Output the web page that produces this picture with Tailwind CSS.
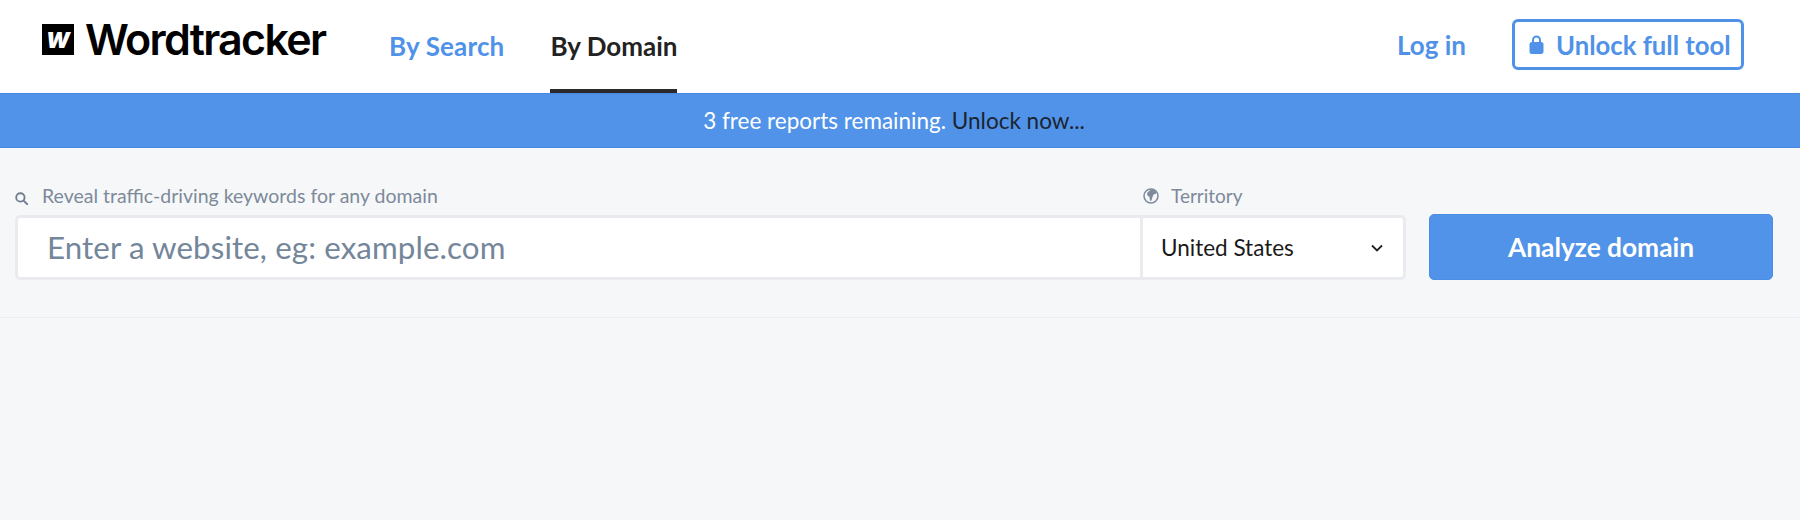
<!DOCTYPE html>
<html lang="en">
<head>
  <meta charset="UTF-8">
  <meta name="viewport" content="width=device-width, initial-scale=1.0">
  <title>Wordtracker</title>
  <script src="https://cdn.jsdelivr.net/npm/@tailwindcss/browser@4"></script>
</head>
<body class="bg-[#f6f7f9] font-['Lato',sans-serif] h-[520px] overflow-hidden">
  <!-- Top nav -->
  <header class="h-[93px] bg-white flex items-stretch pl-[42px] pr-[56px]">
    <a class="flex items-center gap-[11px] h-[79px] w-[347px]">
      <span class="w-[32px] h-[31px] bg-black text-white flex items-center justify-center font-['Inter',sans-serif] font-black italic text-[22px] leading-none">W</span>
      <span class="font-['Inter',sans-serif] font-semibold text-[43px] leading-none tracking-[-1.7px] text-black">Wordtracker</span>
    </a>
    <nav class="flex gap-[46px] text-[26px] font-bold">
      <a class="flex items-center text-[#4f92e8] tracking-[0.15px]">By Search</a>
      <a class="flex items-center text-[#222] border-b-4 border-[#2a2a2a] pt-[4px]">By Domain</a>
    </nav>
    <div class="ml-auto flex items-center gap-[46px] pb-[4px] text-[26px] font-bold text-[#4f92e8]">
      <a class="pt-[2px]">Log in</a>
      <a class="h-[51px] w-[232px] border-[3px] border-[#4f92e8] rounded-[6px] flex items-center gap-[12px] pl-[14px]">
        <svg class="w-[15px] h-[19px]" viewBox="0 0 15 19" fill="#4f92e8">
          <path d="M4 8V5a3.5 3.5 0 0 1 7 0v3" fill="none" stroke="#4f92e8" stroke-width="2"/>
          <rect x="0.5" y="7" width="14" height="12" rx="2.5"/>
        </svg>
        <span class="text-[25.7px] pt-[2px]">Unlock full tool</span>
      </a>
    </div>
  </header>

  <!-- Reports banner -->
  <div class="h-[55px] bg-[#5093e8] border-y border-[#4488e2] flex items-center justify-center pr-[12px] text-[22.5px] text-white">
    <span>3 free reports remaining. <a class="text-[#1c2430]">Unlock now...</a></span>
  </div>

  <!-- Search form -->
  <section class="h-[170px] border-b border-[#ebedf0] pl-[15px] pr-[27px] pt-[32px] flex gap-[23px]">
    <div class="w-[1391px]">
      <div class="flex h-[35px] pb-[3px] text-[19.5px] text-[#7d8a9a]">
        <div class="w-[1128px] flex items-center">
          <svg class="w-[13px] h-[13px] mt-[4px] mr-[14px]" viewBox="0 0 14 14" fill="none" stroke="#6f7d8e" stroke-width="2">
            <circle cx="5.8" cy="5.8" r="4.5"/>
            <path d="M9.2 9.2l4 4" stroke-linecap="round"/>
          </svg>
          Reveal traffic-driving keywords for any domain
        </div>
        <div class="flex items-center gap-[12px] text-[19px]">
          <svg class="w-[16px] h-[16px]" viewBox="0 0 16 16">
            <circle cx="8" cy="8" r="7" fill="none" stroke="#7d8a9a" stroke-width="1.5"/>
            <path d="M5 4l3-2.5 4 1 1.5 3-3 1-1 2.5-1 3.5-1.5.5-.5-4-2-1.5-.5-2z" fill="#7d8a9a"/>
          </svg>
          Territory
        </div>
      </div>
      <div class="h-[65px] flex bg-white border-[3px] border-[#e9ebee] rounded-[5px]">
        <div class="w-[1125px] flex items-center pl-[29px] text-[31.3px] tracking-[0.1px] text-[#74869a] border-r-[3px] border-[#e9ebee]">Enter a website, eg: example.com</div>
        <div class="flex-1 flex items-center justify-between pl-[18px] pr-[20px] text-[22.5px] text-[#1a1a1a]">
          United States
          <svg class="w-[12px] h-[8px]" viewBox="0 0 12 8" fill="none" stroke="#222" stroke-width="1.8">
            <path d="M1 1.5l5 5 5-5"/>
          </svg>
        </div>
      </div>
    </div>
    <button class="w-[344px] h-[66px] mt-[34px] pt-[2px] bg-[#5093e8] border border-[#4a8de4] rounded-[5px] text-white font-bold text-[26.3px]">Analyze domain</button>
  </section>
</body>
</html>
